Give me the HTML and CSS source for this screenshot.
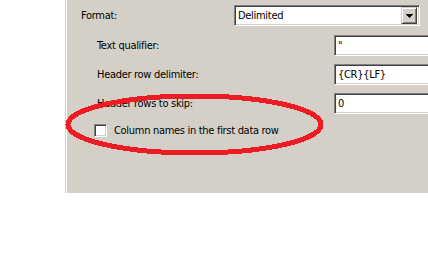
FILE: index.html
```html
<!DOCTYPE html>
<html lang="en">
  <head>
    <meta charset="UTF-8">
    <title>Flat file format</title>
    <link rel="stylesheet" href="styles.css">
  </head>
  <body>
    <div id="page">
      <div id="panel">
        <!-- Format -->
        <div class="row row-format">
          <span class="label label-format">Format:</span>
          <div class="combo">
            <span class="combo-value">Delimited</span>
            <span class="combo-btn">
              <svg width="7" height="4" viewBox="0 0 7 4"><path d="M0 0h7v1h-1v1h-1v1h-1v1h-1v-1h-1v-1h-1v-1h-1z" fill="#000"/></svg>
            </span>
          </div>
        </div>

        <!-- Delimiter options -->
        <div class="row row-sub">
          <span class="label label-sub">Text qualifier:</span>
          <div class="field">"</div>
        </div>
        <div class="row row-sub">
          <span class="label label-sub">Header row delimiter:</span>
          <div class="field">{CR}{LF}</div>
        </div>
        <div class="row row-sub">
          <span class="label label-sub">Header rows to skip:</span>
          <div class="field">0</div>
        </div>

        <div class="check">
          <span class="check-box"></span>
          <span class="check-text">Column names in the first data row</span>
        </div>
      </div>

      <!-- Hand-drawn highlight -->
      <svg class="mark" width="428" height="256" viewBox="0 0 428 256">
        <ellipse cx="194.5" cy="124.5" rx="126.5" ry="28.5" fill="none" stroke="#ed1c24" stroke-width="5" shape-rendering="crispEdges"/>
      </svg>
    </div>
  </body>
</html>
```

FILE: styles.css
```css
body {
  margin: 0;
  background: #fff;
  font-family: "DejaVu Sans Condensed", "DejaVu Sans", sans-serif;
  font-size: 11px;
  letter-spacing: -0.3px;
  color: #000;
  overflow: hidden;
}

#page {
  position: relative;
  width: 428px;
  height: 256px;
  overflow: hidden;
}

#panel {
  margin-left: 65px;
  height: 193px;
  background: #d4d0c8;
  border-left: 1px solid #d4d0c8;
  box-shadow: inset 1px 0 #fff;
  padding: 5px 0 0 15px;
  box-sizing: border-box;
}

.row {
  display: flex;
  align-items: center;
  height: 21px;
}

.row-sub {
  margin-top: 8px;
}

.row-format + .row-sub {
  margin-top: 9px;
}

.label {
  flex: none;
  white-space: nowrap;
}

.label-format {
  width: 153px;
}

.label-sub {
  margin-left: 16px;
  width: 237px;
}

/* sunken 3D edge, classic style */
.combo, .field, .check-box {
  box-sizing: border-box;
  background: #fff;
  border: 1px solid;
  border-color: #808080 #fff #fff #808080;
  box-shadow: inset 1px 1px #404040, inset -1px -1px #d4d0c8;
}

.combo {
  width: 186px;
  height: 21px;
  display: flex;
  align-items: center;
  padding: 2px;
}

.combo-value {
  flex: 1;
  padding-left: 1px;
}

.combo-btn {
  width: 16px;
  height: 17px;
  box-sizing: border-box;
  background: #d4d0c8;
  border: 1px solid;
  border-color: #d4d0c8 #404040 #404040 #d4d0c8;
  box-shadow: inset 1px 1px #fff, inset -1px -1px #808080;
  display: flex;
  align-items: center;
  justify-content: center;
}

.field {
  width: 120px;
  height: 21px;
  padding: 3px 0 0 3px;
  line-height: 14px;
  flex: none;
}

.check {
  display: flex;
  align-items: center;
  margin-top: 10px;
  margin-left: 13px;
  height: 13px;
}

.check-box {
  width: 13px;
  height: 13px;
  flex: none;
  margin-right: 7px;
}

.mark {
  position: absolute;
  left: 0;
  top: 0;
  pointer-events: none;
}
```
